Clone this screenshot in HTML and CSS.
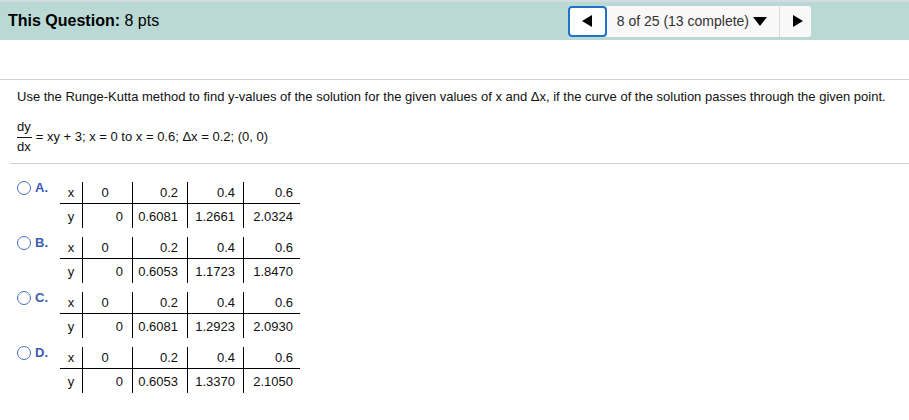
FILE: index.html
```html
<!DOCTYPE html>
<html lang="en">
<head>
    <meta charset="UTF-8">
    <title>Question 8</title>
    <link rel="stylesheet" href="styles.css">
</head>
<body>
    <div class="header">
        <div class="points"><b>This Question:</b> 8 pts</div>
        <div class="nav">
            <button class="nav-btn prev">
                <svg width="10" height="12" viewBox="0 0 10 12"><polygon points="10,0 10,12 0,6" fill="#000"/></svg>
            </button>
            <div class="nav-pos">8 of 25 (13 complete)<svg class="caret" width="14" height="9" viewBox="0 0 14 9"><polygon points="0,0 14,0 7,9" fill="#000"/></svg></div>
            <button class="nav-btn next">
                <svg width="10" height="12" viewBox="0 0 10 12"><polygon points="0,0 10,6 0,12" fill="#000"/></svg>
            </button>
        </div>
    </div>

    <div class="question">
        <p class="prompt">Use the Runge-Kutta method to find y-values of the solution for the given values of x and Δx, if the curve of the solution passes through the given point.</p>
        <div class="equation">
            <span class="frac"><span class="num">dy</span><span class="den">dx</span></span>
            <span>= xy + 3; x = 0 to x = 0.6; Δx = 0.2; (0, 0)</span>
        </div>
    </div>

    <div class="answers">
        <div class="option">
            <span class="radio"></span><span class="letter">A.</span>
            <table>
                <tr class="xrow"><td>x</td><td class="mid">0</td><td>0.2</td><td>0.4</td><td>0.6</td></tr>
                <tr class="yrow"><td>y</td><td>0</td><td>0.6081</td><td>1.2661</td><td>2.0324</td></tr>
            </table>
        </div>
        <div class="option">
            <span class="radio"></span><span class="letter">B.</span>
            <table>
                <tr class="xrow"><td>x</td><td class="mid">0</td><td>0.2</td><td>0.4</td><td>0.6</td></tr>
                <tr class="yrow"><td>y</td><td>0</td><td>0.6053</td><td>1.1723</td><td>1.8470</td></tr>
            </table>
        </div>
        <div class="option">
            <span class="radio"></span><span class="letter">C.</span>
            <table>
                <tr class="xrow"><td>x</td><td class="mid">0</td><td>0.2</td><td>0.4</td><td>0.6</td></tr>
                <tr class="yrow"><td>y</td><td>0</td><td>0.6081</td><td>1.2923</td><td>2.0930</td></tr>
            </table>
        </div>
        <div class="option">
            <span class="radio"></span><span class="letter">D.</span>
            <table>
                <tr class="xrow"><td>x</td><td class="mid">0</td><td>0.2</td><td>0.4</td><td>0.6</td></tr>
                <tr class="yrow"><td>y</td><td>0</td><td>0.6053</td><td>1.3370</td><td>2.1050</td></tr>
            </table>
        </div>
    </div>
</body>
</html>
```

FILE: styles.css
```css
body {
    margin: 0;
    font-family: "Liberation Sans", Arial, sans-serif;
    font-size: 13px;
    color: #111;
    background-color: white;
}
.header {
    display: flex;
    align-items: center;
    height: 38px;
    padding-left: 8px;
    border-top: 2px solid #d2dce0;
    background-color: #bad9d5;
}
.points {
    flex: 1;
    font-size: 16px;
    color: #000;
}
.nav {
    display: flex;
    height: 31px;
    margin-right: 98px;
    border-radius: 3px;
    background-color: #f8f8f8;
}
.nav-btn {
    display: flex;
    align-items: center;
    justify-content: center;
    padding: 0;
    border: none;
    background: none;
}
.prev {
    width: 39px;
    border: 2px solid #1e73c8;
    border-radius: 4px;
    background-color: white;
}
.next {
    width: 32px;
    padding-left: 4px;
    border-left: 1px solid #dcdcdc;
}
.nav-pos {
    display: flex;
    align-items: center;
    padding: 0 12px 0 10px;
    font-size: 14px;
    color: #333;
}
.caret {
    margin-left: 4px;
}
.question {
    margin-top: 39px;
    border-top: 1px solid #d0d0d0;
}
.prompt {
    margin: 0;
    padding: 9px 17px 0;
    line-height: 16px;
}
.equation {
    display: flex;
    align-items: center;
    margin-top: 14px;
    padding: 0 17px 9px;
}
.frac {
    display: flex;
    flex-direction: column;
    margin-right: 4px;
    line-height: 15px;
}
.num {
    padding: 0 1px 3px 0;
    border-bottom: 1px solid #111;
}
.den {
    padding-top: 1px;
}
.answers {
    margin-left: 10px;
    padding: 16px 0 0 7px;
    border-top: 1px solid #d0d0d0;
}
.option {
    display: flex;
    align-items: flex-start;
    height: 55px;
}
.radio {
    width: 12px;
    height: 12px;
    margin-top: 1px;
    border: 1px solid #4a6bc8;
    border-radius: 50%;
}
.letter {
    margin-left: 4px;
    font-weight: bold;
    color: #3a5cb4;
}
table {
    margin: 2px 0 0 12px;
    border-collapse: collapse;
}
td {
    padding: 0 9px 0 4px;
    text-align: right;
    border-left: 1px solid #000;
}
td:first-child {
    width: 22px;
    padding: 0;
    text-align: center;
    border-left: none;
}
td:nth-child(2) { width: 36px; }
td:nth-child(3) { width: 41px; }
td:nth-child(4) { width: 43px; padding-right: 8px; }
td:nth-child(5) { width: 45px; padding-right: 7px; }
td.mid {
    text-align: center;
}
.xrow td {
    height: 21px;
    border-bottom: 1px solid #000;
}
.yrow td {
    height: 24px;
}
```
